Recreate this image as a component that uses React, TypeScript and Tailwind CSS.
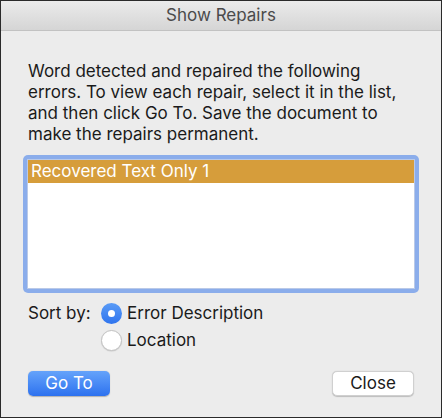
import React from "react";

export default function App() {
  return (
    <div className="w-[442px] h-[418px] border border-[#2a2a2a] bg-[#ececec] flex flex-col font-['Inter',sans-serif] text-[#1a1a1a] overflow-hidden">
      <div className="h-[30px] shrink-0 border-b border-[#c2c2c2] bg-gradient-to-b from-[#ebebeb] to-[#d5d5d5] flex items-center justify-center text-[17px] text-[#4b4b4b]">
        Show Repairs
      </div>
      <div className="flex flex-col px-[27px] pt-[30px]">
        <p className="text-[17px] leading-[21px] w-[372px]">
          Word detected and repaired the following errors. To view each repair, select it in the list, and then click Go To. Save the document to make the repairs permanent.
        </p>
        <div className="mt-[10px] -mx-[5px] h-[138px] rounded-[5px] bg-[#8badeb] p-[4px]">
          <div className="h-full bg-white border border-[#b9c9e8]">
            <div className="h-[23px] bg-[#d69d3b] text-white text-[17px] leading-[23px] pl-[3px]">
              Recovered Text Only 1
            </div>
          </div>
        </div>
        <div className="mt-[7px] flex text-[17px]">
          <div className="w-[73px] h-[27px] flex items-center">Sort by:</div>
          <div className="flex flex-col">
            <div className="h-[27px] flex items-center gap-[5px]">
              <div className="w-[21px] h-[21px] rounded-full bg-gradient-to-b from-[#5a9bf6] to-[#2f74ee] flex items-center justify-center">
                <div className="w-[7px] h-[7px] rounded-full bg-white" />
              </div>
              <span>Error Description</span>
            </div>
            <div className="h-[27px] flex items-center gap-[5px]">
              <div className="w-[21px] h-[21px] rounded-full bg-white border border-[#c3c3c3] shadow-[0_0.5px_1px_rgba(0,0,0,0.15)]" />
              <span>Location</span>
            </div>
          </div>
        </div>
        <div className="mt-[17px] flex justify-between">
          <button className="w-[82px] h-[25px] rounded-[5px] bg-gradient-to-b from-[#65a3fa] to-[#2d71ef] text-white text-[17px] leading-[25px] shadow-[0_0.5px_1px_rgba(0,0,0,0.25)]">
            Go To
          </button>
          <button className="w-[82px] h-[25px] rounded-[5px] bg-white border border-[#d0d0d0] text-[#1a1a1a] text-[17px] leading-[23px] shadow-[0_0.5px_1px_rgba(0,0,0,0.2)]">
            Close
          </button>
        </div>
      </div>
    </div>
  );
}
